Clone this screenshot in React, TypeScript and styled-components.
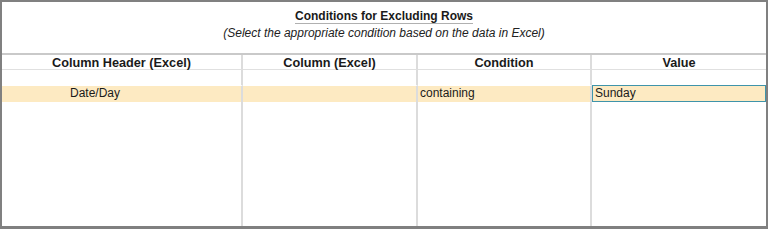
import React from 'react';
import styled, { createGlobalStyle } from 'styled-components';

const GlobalStyle = createGlobalStyle`
  html, body {
    margin: 0;
    padding: 0;
    background: #ffffff;
  }
  * {
    box-sizing: border-box;
  }
`;

const Frame = styled.div`
  width: 768px;
  height: 229px;
  border: 2px solid #808080;
  border-bottom-width: 3px;
  background: #ffffff;
  display: flex;
  flex-direction: column;
  font-family: 'Liberation Sans', Arial, sans-serif;
  color: #1a1a1a;
`;

const TitleBlock = styled.div`
  height: 53px;
  flex-shrink: 0;
  display: flex;
  flex-direction: column;
  align-items: center;
  padding-top: 8px;
  border-bottom: 2px solid #c9c9c9;
`;

const Title = styled.div`
  font-size: 12px;
  font-weight: bold;
  line-height: 13px;
  border-bottom: 1px solid #b0b0b0;
`;

const Subtitle = styled.div`
  font-size: 12px;
  font-style: italic;
  line-height: 14px;
  margin-top: 2px;
  color: #222;
`;

const Grid = styled.div`
  flex: 1;
  display: grid;
  grid-template-columns: 241px 175px 174px 1fr;
  grid-template-rows: 15px 15px 17px 1fr;
`;

const HeadCell = styled.div<{ $last?: boolean }>`
  font-size: 12.7px;
  font-weight: bold;
  line-height: 14px;
  text-align: center;
  padding-top: 1px;
  border-bottom: 1px solid #e0e0e0;
  border-right: ${(p) => (p.$last ? 'none' : '2px solid #dcdcdc')};
`;

const Cell = styled.div<{ $last?: boolean; $hot?: boolean; $indent?: number; $focus?: boolean }>`
  font-size: 12px;
  line-height: 15px;
  padding-left: ${(p) => p.$indent ?? 2}px;
  background: ${(p) => (p.$hot ? '#fdeac2' : 'transparent')};
  border-right: ${(p) => (p.$last ? 'none' : '2px solid #dcdcdc')};
  ${(p) =>
    p.$focus &&
    `
    border: 1px solid #3f94aa;
    padding-left: 2px;
  `}
  ${(p) => p.$hot && !p.$focus && 'border-top: 1px solid #ffffff;'}
`;

const columns = ['Column Header (Excel)', 'Column (Excel)', 'Condition', 'Value'];

type RowData = { header: string; column: string; condition: string; value: string };

const rows: RowData[] = [
  { header: 'Date/Day', column: '', condition: 'containing', value: 'Sunday' },
];

export default function App() {
  return (
    <>
      <GlobalStyle />
      <Frame>
        <TitleBlock>
          <Title>Conditions for Excluding Rows</Title>
          <Subtitle>(Select the appropriate condition based on the data in Excel)</Subtitle>
        </TitleBlock>
        <Grid>
          {columns.map((c, i) => (
            <HeadCell key={c} $last={i === columns.length - 1}>
              {c}
            </HeadCell>
          ))}
          <Cell />
          <Cell />
          <Cell />
          <Cell $last />
          {rows.map((r) => (
            <React.Fragment key={r.header}>
              <Cell $hot $indent={68}>{r.header}</Cell>
              <Cell $hot>{r.column}</Cell>
              <Cell $hot>{r.condition}</Cell>
              <Cell $hot $last $focus>{r.value}</Cell>
            </React.Fragment>
          ))}
          <Cell />
          <Cell />
          <Cell />
          <Cell $last />
        </Grid>
      </Frame>
    </>
  );
}
